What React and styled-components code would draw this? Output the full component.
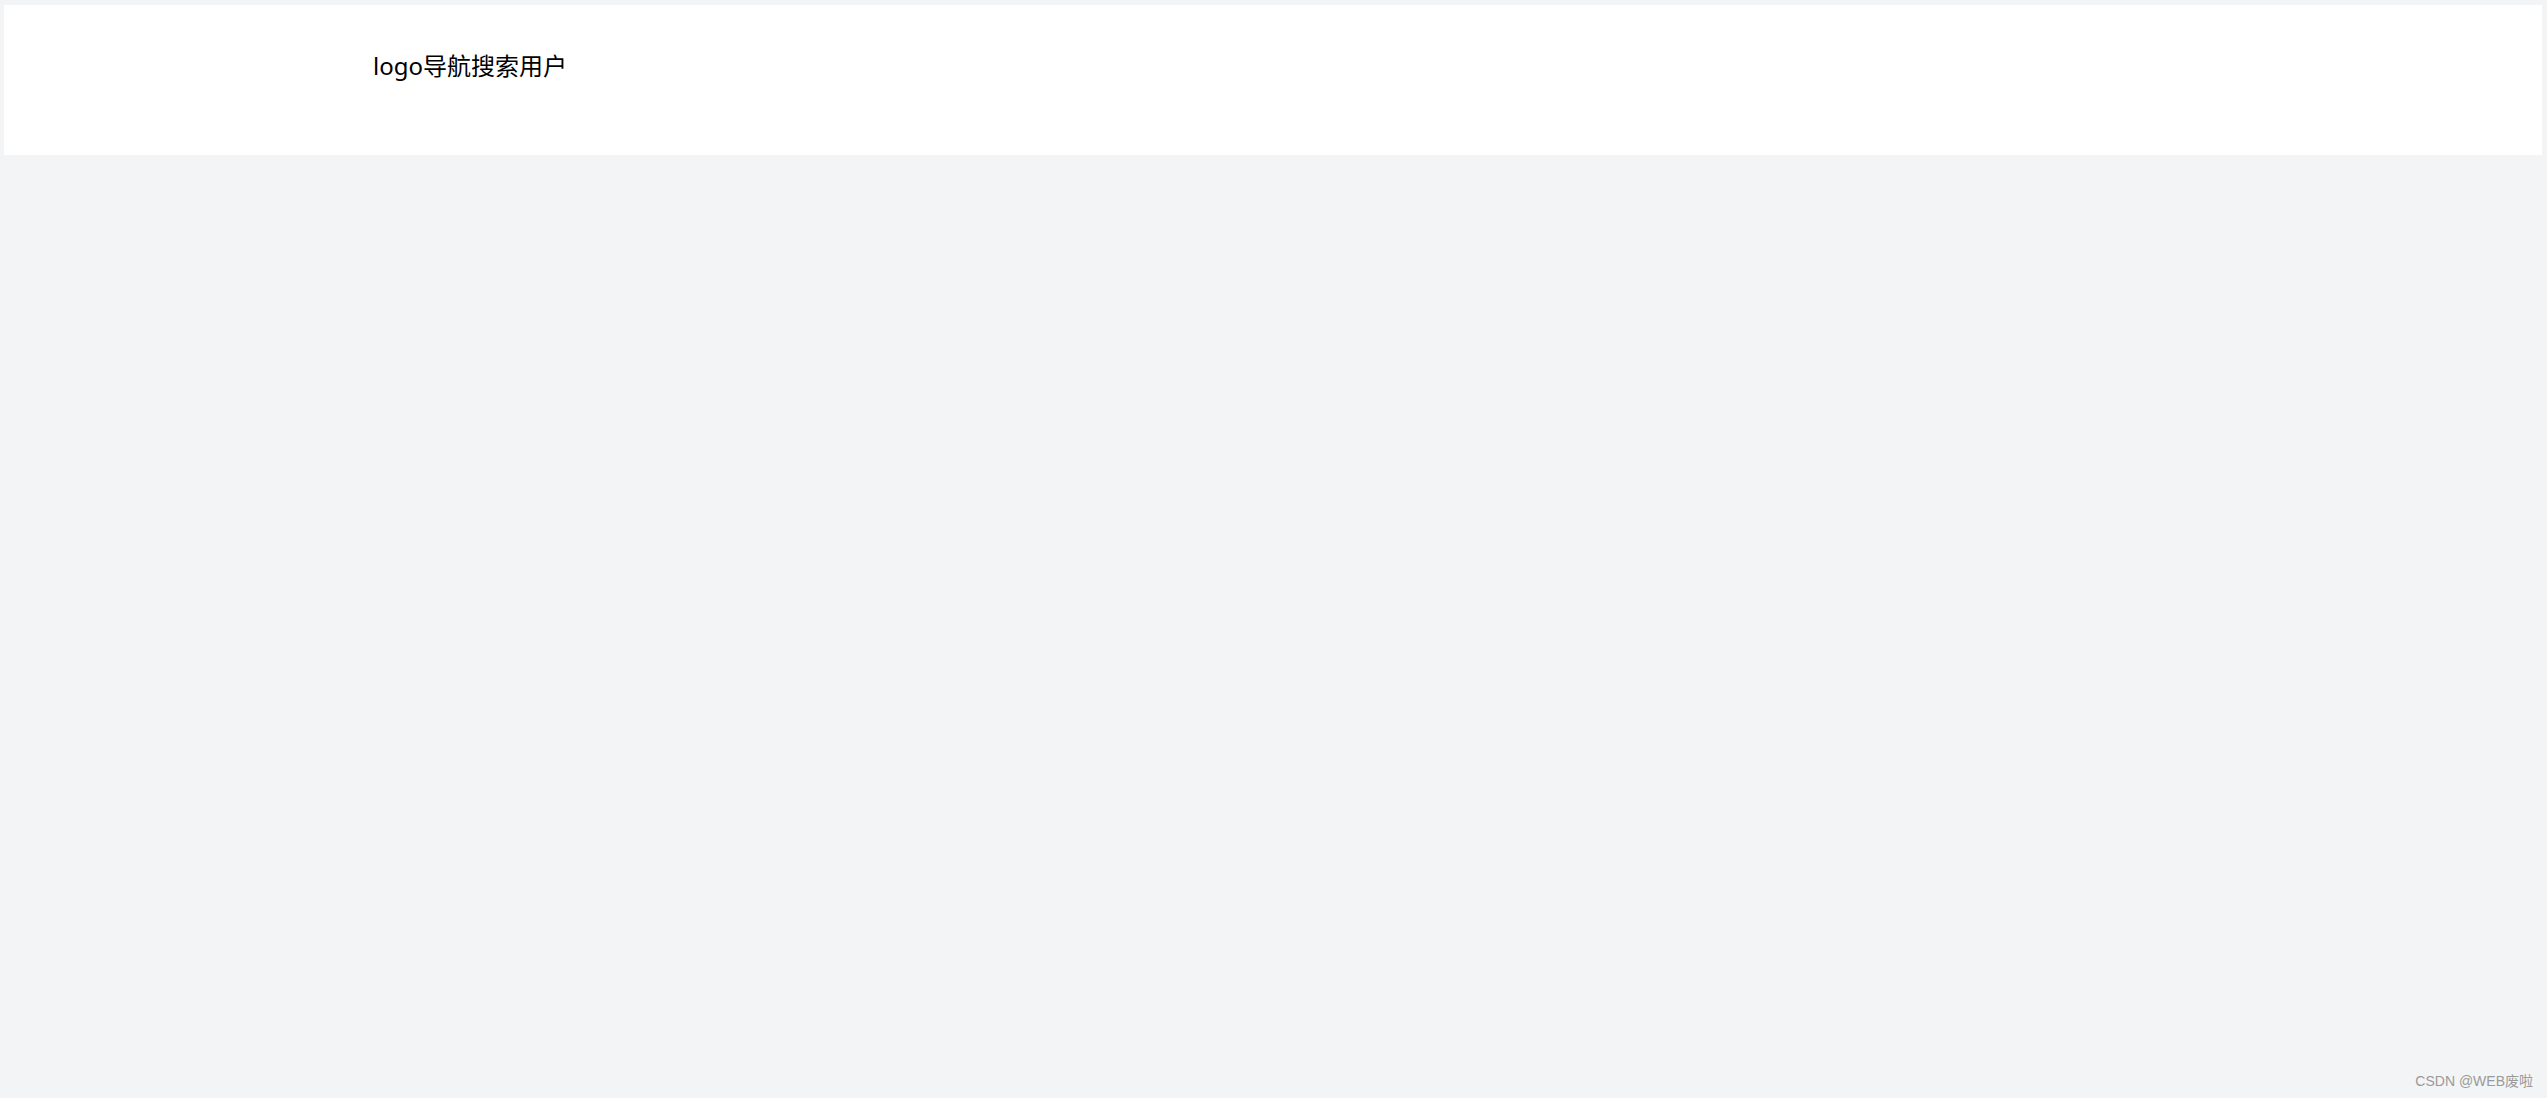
import React from "react";
import styled, { createGlobalStyle } from "styled-components";

const Global = createGlobalStyle`
  html, body {
    margin: 0;
    padding: 0;
    background: #f3f4f6;
  }
  body {
    font-family: "Noto Sans", "Noto Sans CJK SC", sans-serif;
  }
`;

const Page = styled.div`
  position: relative;
  min-height: 1098px;
  padding: 5px 5px 0 4px;
  box-sizing: border-box;
  background: #f3f4f6;
`;

const Header = styled.header`
  background: #ffffff;
  height: 150px;
  box-sizing: border-box;
  padding-top: 45px;
`;

const Container = styled.div`
  width: 1800px;
  margin: 0 auto;
  display: flex;
  align-items: center;
`;

const Item = styled.span`
  font-size: 24px;
  line-height: 32px;
  color: #000;
  font-family: "Noto Sans", "Noto Sans CJK SC", sans-serif;
`;

const Watermark = styled.div`
  position: absolute;
  right: 14px;
  bottom: 9px;
  font-size: 14px;
  line-height: 16px;
  color: #9a9a9a;
  font-family: "Liberation Sans", "Noto Sans CJK SC", sans-serif;
`;

export default function App() {
  const items = ["logo", "导航", "搜索", "用户"];
  return (
    <>
      <Global />
      <Page>
        <Header>
          <Container>
            {items.map((t) => (
              <Item key={t}>{t}</Item>
            ))}
          </Container>
        </Header>
        <Watermark>CSDN @WEB废啦</Watermark>
      </Page>
    </>
  );
}
